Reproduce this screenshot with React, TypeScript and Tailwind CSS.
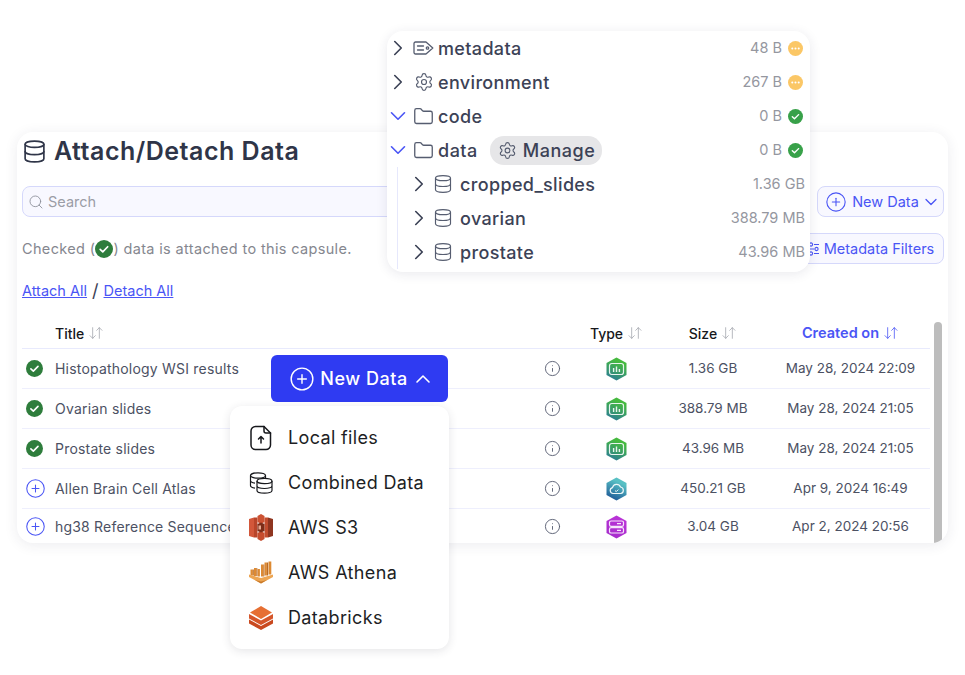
import React from "react";
import {
  ArrowDownUp,
  ChevronDown,
  ChevronRight,
  ChevronUp,
  CirclePlus,
  Database,
  Ellipsis,
  Folder,
  Info,
  Search,
  Settings,
} from "lucide-react";

const FONT = "font-['Inter','Liberation_Sans',sans-serif]";

const CheckBadge = ({ size = 16, color = "#2e7d3c" }: { size?: number; color?: string }) => (
  <svg width={size} height={size} viewBox="0 0 16 16" className="shrink-0">
    <circle cx="8" cy="8" r="8" fill={color} />
    <path d="M4.6 8.3l2.3 2.2 4.4-4.5" fill="none" stroke="#fff" strokeWidth="1.5" strokeLinecap="round" strokeLinejoin="round" />
  </svg>
);

const PendingBadge = () => (
  <div className="flex h-[15px] w-[15px] shrink-0 items-center justify-center rounded-full bg-[#fbc766]">
    <Ellipsis size={11} color="#fff" strokeWidth={2.5} />
  </div>
);

const TagIcon = () => (
  <svg width="21" height="14" viewBox="0 0 21 14" fill="none" stroke="#565d70" strokeWidth="1.3" strokeLinecap="round" strokeLinejoin="round">
    <path d="M2.5 1h10.5l6.8 6-6.8 6H2.5A1.5 1.5 0 0 1 1 11.5v-9A1.5 1.5 0 0 1 2.5 1z" />
    <path d="M4.5 5h6M4.5 9h6" />
    <circle cx="14.5" cy="7" r="1.2" />
  </svg>
);

const FilterIcon = () => (
  <svg width="12" height="14" viewBox="0 0 12 14" fill="none" stroke="#4a55f5" strokeWidth="1.1" className="shrink-0">
    <circle cx="3" cy="2.5" r="1.6" />
    <circle cx="8.5" cy="7" r="1.6" />
    <circle cx="3" cy="11.5" r="1.6" />
    <path d="M6 2.5h5M1 7h5M6 11.5h5" />
  </svg>
);

const HexIcon = ({ id, from, to, kind }: { id: string; from: string; to: string; kind: "bars" | "cloud" | "server" }) => (
  <svg width="21" height="24" viewBox="0 0 21 24">
    <defs>
      <linearGradient id={id} x1="0.7" y1="0" x2="0.3" y2="1">
        <stop offset="0.2" stopColor={from} />
        <stop offset="1" stopColor={to} />
      </linearGradient>
    </defs>
    <path d="M10.5 0.5L20.5 6v12l-10 5.5L0.5 18V6z" fill={`url(#${id})`} />
    {kind === "bars" && (
      <g fill="none" stroke="#e8f3ee" strokeWidth="1.2">
        <rect x="3.5" y="6.5" width="14" height="11" rx="2.2" />
        <path d="M7.6 15v-4M10.5 15V9.5M13.4 15v-3" strokeWidth="1.4" />
      </g>
    )}
    {kind === "cloud" && (
      <g fill="none" stroke="#eef7f8" strokeWidth="1.2" strokeLinejoin="round">
        <path d="M7 16.5a3 3 0 0 1-.5-5.9 4.2 4.2 0 0 1 8-.6 3.3 3.3 0 0 1 .2 6.5z" />
        <path d="M9 13.6l1.3 1 2-2" strokeWidth="1" />
      </g>
    )}
    {kind === "server" && (
      <g fill="none" stroke="#f6e6fb" strokeWidth="1.2">
        <rect x="3.5" y="6" width="14" height="5.4" rx="1.6" />
        <rect x="3.5" y="12.6" width="14" height="5.4" rx="1.6" />
        <path d="M11 8.7h4M11 15.3h4" />
      </g>
    )}
  </svg>
);

const LocalFilesIcon = () => (
  <svg width="22" height="26" viewBox="0 0 22 26" fill="none" stroke="#17181c" strokeWidth="1.5" strokeLinecap="round" strokeLinejoin="round">
    <path d="M5.5 1.5h8.5l6.5 6.5v12a4.5 4.5 0 0 1-4.5 4.5H5.5A4.5 4.5 0 0 1 1 20V6a4.5 4.5 0 0 1 4.5-4.5z" />
    <path d="M14 1.5V6a2 2 0 0 0 2 2h4.5" />
    <path d="M11 18v-6.5M8.5 14l2.5-2.5 2.5 2.5" />
  </svg>
);

const CombinedIcon = () => (
  <svg width="24" height="22" viewBox="0 0 24 22" fill="none" stroke="#17181c" strokeWidth="1.2">
    <ellipse cx="9" cy="3.5" rx="7.5" ry="2.7" />
    <path d="M1.5 3.5v10c0 1.3 2 2.3 4.5 2.6M1.5 8.5c0 1.3 2 2.3 4.5 2.6M16.5 3.5v3" />
    <ellipse cx="15.5" cy="9" rx="7.5" ry="2.7" />
    <path d="M8 9v9.5c0 1.5 3.4 2.7 7.5 2.7s7.5-1.2 7.5-2.7V9M8 13.8c0 1.5 3.4 2.7 7.5 2.7s7.5-1.2 7.5-2.7" />
  </svg>
);

const S3Icon = () => (
  <svg width="24" height="27" viewBox="0 0 24 27">
    <path d="M0 5l5-1.5v20L0 22z" fill="#d2573a" />
    <path d="M24 5l-5-1.5v20l5-1.5z" fill="#8f3520" />
    <path d="M5 3.5h3.5v20H5z" fill="#b8452a" />
    <path d="M15.5 3.5H19v20h-3.5z" fill="#c24c2f" />
    <path d="M12 0l3.5 2v6l-3.5 2-3.5-2V2z" fill="#cc5233" />
    <path d="M12 17l3.5 2v6L12 27l-3.5-2v-6z" fill="#c54c2e" />
    <path d="M8.5 10l3.5-1.5 3.5 1.5v7l-3.5 1.5L8.5 17z" fill="#7c2c18" />
    <path d="M9.5 11.5h2.5v4H9.5z" fill="#e9a890" />
  </svg>
);

const AthenaIcon = () => (
  <svg width="24" height="23" viewBox="0 0 24 23">
    <g fill="#dd8a33">
      <rect x="1.5" y="8.5" width="2.4" height="6" />
      <rect x="5" y="7" width="2.4" height="8" />
      <rect x="8.5" y="8" width="2.4" height="7.5" />
      <rect x="12" y="3.5" width="2.4" height="12" />
      <rect x="15.5" y="1.5" width="2.4" height="13" />
      <rect x="19.5" y="0.5" width="2.8" height="13" />
    </g>
    <g fill="#b96a24">
      <rect x="3.9" y="8.5" width="0.9" height="6" />
      <rect x="7.4" y="7" width="0.9" height="8" />
      <rect x="14.4" y="3.5" width="0.9" height="12" />
      <rect x="17.9" y="1.5" width="1.2" height="13" />
    </g>
    <path d="M0 13.5l12 3.5 12-3.5v2.5L12 22.5 0 16z" fill="#eda552" />
    <path d="M6 19l6 3.5 6-3.5-6 1.5z" fill="#c97a2b" />
  </svg>
);

const DatabricksIcon = () => (
  <svg width="24" height="24" viewBox="0 0 24 24">
    <path d="M0 13.5l12 6.5 12-6.5v4L12 24 0 17.5z" fill="#c9491f" />
    <path d="M0 8l12 6.5L24 8v4.5l-12 6.5-12-6.5z" fill="#d5562a" />
    <path d="M12 0l11 6.5-11 6.5L1 6.5z" fill="#e66f33" />
  </svg>
);

const SortIcon = ({ active }: { active?: boolean }) => (
  <ArrowDownUp size={16} strokeWidth={1.2} color={active ? "#4a55f5" : "#a5a7ae"} className="shrink-0" />
);

const treeRows = [
  { name: "metadata", size: "48 B", open: false, icon: <TagIcon />, status: <PendingBadge /> },
  { name: "environment", size: "267 B", open: false, icon: <Settings size={20} color="#565d70" strokeWidth={1.4} />, status: <PendingBadge /> },
  { name: "code", size: "0 B", open: true, icon: <Folder size={21} color="#565d70" strokeWidth={1.5} />, status: <CheckBadge size={15} color="#38a149" /> },
];

const childRows = [
  { name: "cropped_slides", size: "1.36 GB" },
  { name: "ovarian", size: "388.79 MB" },
  { name: "prostate", size: "43.96 MB" },
];

const dataRows = [
  { title: "Histopathology WSI results", attached: true, kind: "bars", size: "1.36 GB", date: "May 28, 2024 22:09" },
  { title: "Ovarian slides", attached: true, kind: "bars", size: "388.79 MB", date: "May 28, 2024 21:05" },
  { title: "Prostate slides", attached: true, kind: "bars", size: "43.96 MB", date: "May 28, 2024 21:05" },
  { title: "Allen Brain Cell Atlas", attached: false, kind: "cloud", size: "450.21 GB", date: "Apr 9, 2024 16:49" },
  { title: "hg38 Reference Sequence", attached: false, kind: "server", size: "3.04 GB", date: "Apr 2, 2024 20:56" },
] as const;

const hexColors = {
  bars: { from: "#45b93f", to: "#2c7d95" },
  cloud: { from: "#58c0c4", to: "#1d5796" },
  server: { from: "#b833d6", to: "#a52ccb" },
};

const menuItems = [
  { label: "Local files", icon: <LocalFilesIcon /> },
  { label: "Combined Data", icon: <CombinedIcon /> },
  { label: "AWS S3", icon: <S3Icon /> },
  { label: "AWS Athena", icon: <AthenaIcon /> },
  { label: "Databricks", icon: <DatabricksIcon /> },
];

const TreePanel = () => (
  <div className="absolute left-[387px] top-[31px] h-[241px] w-[423px] rounded-2xl bg-white shadow-[0_2px_12px_rgba(40,40,80,0.1)]">
    {treeRows.map((row) => (
      <div key={row.name} className="flex h-[34px] items-center pr-[7px]">
        <div className="flex w-[23px] justify-center">
          {row.open ? (
            <ChevronDown size={26} color="#4a55f5" strokeWidth={1.5} className="mr-[2px] shrink-0" />
          ) : (
            <ChevronRight size={26} color="#3a4054" strokeWidth={1.5} className="mr-[2px] shrink-0" />
          )}
        </div>
        <div className="flex w-[26px] justify-center pl-[1px]">{row.icon}</div>
        <span className="ml-[2px] text-[18px] font-medium tracking-[0.35px] text-[#3c4256]">{row.name}</span>
        <span className="ml-auto mr-[6px] text-[14.5px] text-[#95979f]">{row.size}</span>
        {row.status}
      </div>
    ))}
    <div className="flex h-[34px] items-center pr-[7px]">
      <div className="flex w-[23px] justify-center">
        <ChevronDown size={26} color="#4a55f5" strokeWidth={1.5} className="mr-[2px] shrink-0" />
      </div>
      <div className="flex w-[26px] justify-center pl-[1px]">
        <Folder size={21} color="#565d70" strokeWidth={1.5} />
      </div>
      <span className="ml-[2px] text-[18px] font-medium tracking-[0.5px] text-[#3c4256]">data</span>
      <div className="ml-[12px] flex h-[29px] w-[112px] items-center gap-[6px] rounded-[14px] bg-[#e6e6e8] pl-[8px]">
        <Settings size={19} color="#565d70" strokeWidth={1.4} />
        <span className="text-[18px] font-medium tracking-[0.5px] text-[#3c4256]">Manage</span>
      </div>
      <span className="ml-auto mr-[6px] text-[14.5px] text-[#95979f]">0 B</span>
      <CheckBadge size={15} color="#38a149" />
    </div>
    <div className="ml-[10px] border-l border-[#e6e8fc]">
      {childRows.map((row) => (
        <div key={row.name} className="flex h-[34px] items-center pr-[5px]">
          <ChevronRight size={26} color="#3a4054" strokeWidth={1.5} className="ml-[8px] shrink-0" />
          <Database size={20} color="#565d70" strokeWidth={1.4} className="ml-[1px]" />
          <span className="ml-[7px] text-[18px] font-medium tracking-[0.35px] text-[#3c4256]">{row.name}</span>
          <span className="ml-auto text-[14.5px] text-[#95979f]">{row.size}</span>
        </div>
      ))}
    </div>
  </div>
);

const NewDataMenu = () => (
  <>
    <div className="absolute left-[271px] top-[355px] flex h-[47px] w-[177px] items-center justify-center gap-[5px] rounded-md bg-[#2f3bf2] pl-[5px] text-white">
      <CirclePlus size={26} strokeWidth={1.3} />
      <span className="text-[18px] font-medium tracking-[0.5px]">New Data</span>
      <ChevronUp size={24} strokeWidth={1.6} className="-ml-[2px]" />
    </div>
    <div className="absolute left-[230px] top-[406px] h-[243px] w-[219px] rounded-xl bg-white py-[9px] shadow-[0_2px_10px_rgba(40,40,60,0.12)]">
      {menuItems.map((item) => (
        <div key={item.label} className="flex h-[45px] items-center">
          <div className="flex w-[58px] justify-center pl-[3px]">{item.icon}</div>
          <span className="text-[18px] tracking-[0.35px] text-[#1d1e24]">{item.label}</span>
        </div>
      ))}
    </div>
  </>
);

const DataTable = () => (
  <div className="ml-[5px] mr-[18px] text-[13.5px] text-[#4c5163]">
    <div className="grid h-[31px] grid-cols-[33px_514px_94px_100px_1fr] items-center border-b border-[#e8eafd] text-[14px] font-medium text-[#17181c]">
      <div />
      <div className="flex items-center gap-[4px]">
        Title <SortIcon />
      </div>
      <div className="flex items-center justify-center gap-[4px] pl-[1px]">
        Type <SortIcon />
      </div>
      <div className="flex items-center justify-center gap-[4px]">
        Size <SortIcon />
      </div>
      <div className="flex items-center justify-center gap-[4px] pl-[8px] text-[14.5px] font-semibold text-[#4a55f5]">
        Created on <SortIcon active />
      </div>
    </div>
    {dataRows.map((row) => (
      <div
        key={row.title}
        className="grid h-[40px] grid-cols-[33px_514px_94px_100px_1fr] items-center border-b border-[#eeeffd] last:h-[35px] last:border-b-0"
      >
        <div className="pl-[4px]">
          {row.attached ? <CheckBadge size={17} /> : <CirclePlus size={21} color="#4a55f5" strokeWidth={1.2} className="-ml-[1px]" />}
        </div>
        <div className="flex items-center justify-between pr-[8px]">
          <span className="whitespace-nowrap text-[14px] tracking-[0.2px]">{row.title}</span>
          <Info size={17} color="#565d70" strokeWidth={1.3} />
        </div>
        <div className="flex justify-center pl-[1px]">
          <HexIcon id={`hex-${row.title.slice(0, 3)}`} kind={row.kind} {...hexColors[row.kind]} />
        </div>
        <div className="text-center">{row.size}</div>
        <div className="whitespace-nowrap pl-[8px] text-center">{row.date}</div>
      </div>
    ))}
  </div>
);

const App = () => {
  return (
    <div className={`relative h-[675px] w-[965px] overflow-hidden bg-white ${FONT}`}>
      <div className="pl-[17px] pt-[132px]">
        <div className="relative h-[411px] w-[931px] overflow-hidden rounded-2xl bg-white shadow-[0_2px_14px_rgba(40,40,80,0.09)]">
          <div className="flex h-[39px] items-center pl-[5px]">
            <Database size={25} color="#2f3548" strokeWidth={1.6} />
            <h1 className="ml-[7px] text-[25px] font-semibold tracking-[0.5px] text-[#2f3548]">Attach/Detach Data</h1>
          </div>
          <div className="mt-[15px] flex gap-[8px] pl-[5px] pr-[4px]">
            <div className="flex h-[31px] flex-1 items-center gap-[4px] rounded-lg border border-[#d5d8fb] bg-[#f8f8ff] pl-[5px] text-[14.5px] text-[#9b9da6]">
              <Search size={16} color="#8b8e99" strokeWidth={1.3} />
              Search
            </div>
            <div className="flex h-[31px] w-[127px] items-center justify-center gap-[5px] rounded-lg border border-[#d5d8fb] bg-[#f8f8ff] pl-[5px] text-[14.5px] text-[#4a55f5]">
              <CirclePlus size={22} strokeWidth={1.2} />
              New Data
              <ChevronDown size={20} strokeWidth={1.5} className="-ml-[3px]" />
            </div>
          </div>
          <div className="mt-[16px] flex items-center justify-between pl-[5px] pr-[4px]">
            <div className="flex items-center text-[14.5px] tracking-[0.35px] text-[#85878f]">
              Checked (<CheckBadge size={18} />) data is attached to this capsule.
            </div>
            <div className="flex h-[31px] w-[146px] items-center justify-center gap-[4px] rounded-lg border border-[#d5d8fb] bg-[#f8f8ff] text-[14.5px] text-[#4a55f5]">
              <FilterIcon />
              Metadata Filters
            </div>
          </div>
          <div className="mt-[13px] flex items-center gap-[5px] pl-[5px] text-[14.5px] text-[#3c4256]">
            <a className="text-[#4a55f5] underline">Attach All</a>
            <span className="text-[18px]">/</span>
            <a className="text-[#4a55f5] underline">Detach All</a>
          </div>
          <div className="mt-[14px]">
            <DataTable />
          </div>
          <div className="absolute bottom-0 right-[6px] top-[190px] w-[8px] rounded-t bg-[#bdbdbd]" />
        </div>
      </div>
      <TreePanel />
      <NewDataMenu />
    </div>
  );
};

export default App;
